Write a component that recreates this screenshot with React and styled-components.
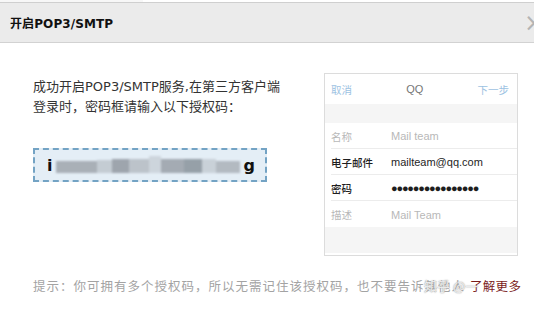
import styled, { createGlobalStyle } from "styled-components"

const GlobalStyle = createGlobalStyle`
  html, body {
    margin: 0;
    padding: 0;
    background: #fff;
  }
  body {
    width: 534px;
    height: 310px;
    overflow: hidden;
    font-family: "DejaVu Sans", "Noto Sans CJK SC", sans-serif;
  }
`

const Dialog = styled.div`
  width: 534px;
  height: 310px;
  display: flex;
  flex-direction: column;
  position: relative;
  overflow: hidden;
`

const TopEdge = styled.div`
  height: 2px;
  background: linear-gradient(to right, #f7f7f7 0 143px, #fff 143px);
  border-bottom: 1px solid #cfcfcf;
`

const Header = styled.div`
  height: 39px;
  background: #ebebeb;
  border-bottom: 1px solid #d2d2d2;
  display: flex;
  align-items: center;
  justify-content: space-between;
  padding-left: 10px;
`

const Title = styled.h1`
  margin: 0;
  font-size: 12px;
  font-weight: bold;
  color: #111;
  letter-spacing: 0.1px;
`

const Close = styled.span`
  font-family: "DejaVu Sans", sans-serif;
  font-size: 24px;
  color: #b4b4b4;
  margin-right: -10px;
  line-height: 1;
`

const Body = styled.div`
  display: flex;
  padding: 30px 16px 0 33px;
  gap: 30px;
`

const Left = styled.div`
  flex: 1;
  display: flex;
  flex-direction: column;
  padding-top: 4px;
`

const Intro = styled.p`
  margin: 0;
  font-size: 13px;
  line-height: 20px;
  color: #333;
  white-space: nowrap;
`

const CodeBox = styled.div`
  margin-top: 31px;
  width: 234px;
  height: 34px;
  box-sizing: border-box;
  border: 2px dashed #73a3c4;
  background: #e4eef6;
  display: flex;
  align-items: center;
  padding: 0 10px 0 12px;
  gap: 4px;
`

const CodeChar = styled.span`
  font-size: 16px;
  font-weight: bold;
  color: #111;
`

const Smudge = styled.div`
  flex: 1;
  height: 14px;
  display: flex;
  filter: blur(1.2px);
  margin-top: 2px;
`

const SmudgeBlock = styled.div`
  flex: ${(p) => p.$w};
  background: ${(p) => p.$c};
  margin-top: ${(p) => p.$t || 0}px;
`

const Phone = styled.div`
  width: 192px;
  height: 181px;
  flex-shrink: 0;
  border: 1px solid #dcdcdc;
  display: flex;
  flex-direction: column;
  background: #fff;
  font-family: "Noto Sans CJK SC", sans-serif;
`

const NavBar = styled.div`
  height: 30px;
  display: flex;
  align-items: center;
  justify-content: space-between;
  padding: 0 8px 0 6px;
  font-size: 10.5px;
`

const NavLink = styled.span`
  color: #9cc2e2;
`

const NavTitle = styled.span`
  color: #777;
  font-family: "Liberation Sans", sans-serif;
  font-size: 11px;
`

const Band = styled.div`
  height: ${(p) => p.$h}px;
  background: #f5f5f5;
`

const Row = styled.div`
  height: 26px;
  margin-left: 6px;
  display: flex;
  align-items: center;
  padding-top: 1px;
  box-sizing: border-box;
  font-size: 10.5px;
  color: ${(p) => (p.$muted ? "#b8b8b8" : "#1e1e1e")};
  border-bottom: ${(p) => (p.$last ? "none" : "1px solid #ececec")};
`

const RowLabel = styled.span`
  width: 60px;
  font-weight: ${(p) => (p.$muted ? "normal" : "500")};
`

const RowValue = styled.span`
  font-family: "Liberation Sans", sans-serif;
  font-size: 11px;
  letter-spacing: ${(p) => (p.$dots ? "-1.2px" : "0")};
`

const Footer = styled.p`
  margin: 20px 0 0 33px;
  font-size: 12.5px;
  color: #a3a3a3;
  letter-spacing: 1px;
  white-space: nowrap;
`

const MoreLink = styled.a`
  color: #7b1c1c;
  text-decoration: none;
  letter-spacing: 0.3px;
`

const Watermark = styled.span`
  position: absolute;
  left: 424px;
  top: 276px;
  font-family: "Noto Sans CJK SC", sans-serif;
  font-size: 13px;
  color: rgba(255, 255, 255, 0.8);
  text-shadow: 0 0 1px #999, 0 0 2px #bbb;
  pointer-events: none;
`

const smudges = [
  { w: 14, c: "#a9b0b7", t: 2 },
  { w: 5, c: "#c4ccd3", t: 1 },
  { w: 6, c: "#9ea5ad" },
  { w: 7, c: "#bcc3ca" },
  { w: 4, c: "#cdd5dc", t: -3 },
  { w: 8, c: "#a4abb3" },
  { w: 6, c: "#96a0a8" },
  { w: 5, c: "#c9d1d8" },
  { w: 8, c: "#b3bac1", t: 2 },
]

export default function App() {
  return (
    <Dialog>
      <GlobalStyle />
      <TopEdge />
      <Header>
        <Title>开启POP3/SMTP</Title>
        <Close>×</Close>
      </Header>
      <Body>
        <Left>
          <Intro>
            成功开启POP3/SMTP服务,在第三方客户端
            <br />
            登录时，密码框请输入以下授权码：
          </Intro>
          <CodeBox>
            <CodeChar>i</CodeChar>
            <Smudge>
              {smudges.map((s, i) => (
                <SmudgeBlock key={i} $w={s.w} $c={s.c} $t={s.t} />
              ))}
            </Smudge>
            <CodeChar>g</CodeChar>
          </CodeBox>
        </Left>
        <Phone>
          <NavBar>
            <NavLink>取消</NavLink>
            <NavTitle>QQ</NavTitle>
            <NavLink>下一步</NavLink>
          </NavBar>
          <Band $h={19} />
          <Row $muted>
            <RowLabel $muted>名称</RowLabel>
            <RowValue>Mail team</RowValue>
          </Row>
          <Row>
            <RowLabel>电子邮件</RowLabel>
            <RowValue>mailteam@qq.com</RowValue>
          </Row>
          <Row>
            <RowLabel>密码</RowLabel>
            <RowValue $dots>●●●●●●●●●●●●●●●●</RowValue>
          </Row>
          <Row $muted $last>
            <RowLabel $muted>描述</RowLabel>
            <RowValue>Mail Team</RowValue>
          </Row>
          <Band $h={26} />
        </Phone>
      </Body>
      <Footer>
        提示：你可拥有多个授权码，所以无需记住该授权码，也不要告诉其他人 <MoreLink href="#">了解更多</MoreLink>
      </Footer>
      <Watermark>知乎 @一</Watermark>
    </Dialog>
  )
}
